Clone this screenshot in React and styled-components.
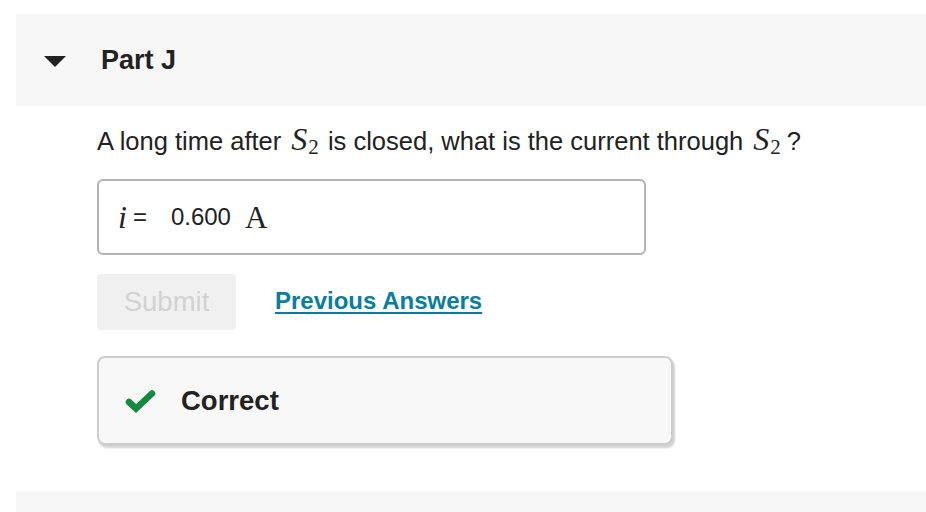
import React from "react";
import styled, { createGlobalStyle } from "styled-components";

const Global = createGlobalStyle`
  html, body {
    margin: 0;
    padding: 0;
    background: #ffffff;
    font-family: "Liberation Sans", Arial, sans-serif;
    color: #222222;
  }
`;

const Page = styled.div`
  width: 926px;
  height: 512px;
  overflow: hidden;
  padding-top: 14px;
  box-sizing: border-box;
`;

const PartHeader = styled.div`
  margin-left: 16px;
  height: 92px;
  background: #f7f7f7;
  display: flex;
  align-items: center;
  gap: 35px;
  padding-left: 28px;
  box-sizing: border-box;
`;

const Caret = styled.span`
  width: 0;
  height: 0;
  border-left: 11px solid transparent;
  border-right: 11px solid transparent;
  border-top: 11px solid #222;
  margin-top: 2px;
`;

const PartTitle = styled.h2`
  margin: 0;
  font-size: 27px;
  font-weight: 700;
  color: #222;
`;

const Body = styled.div`
  padding-left: 97px;
  padding-top: 17px;
  display: flex;
  flex-direction: column;
`;

const Question = styled.p`
  margin: 0;
  font-size: 25.5px;
  line-height: 32px;
  color: #222;
`;

const MathVar = styled.span`
  font-family: "Liberation Serif", "Times New Roman", serif;
  font-style: italic;
  font-size: 32px;
  line-height: 1;
  margin: 0 ${(p) => p.$right || "2px"} 0 3px;
  & sub {
    font-style: normal;
    font-size: 21px;
    vertical-align: -4px;
    margin-left: 1px;
  }
`;

const AnswerBox = styled.div`
  margin-top: 21px;
  width: 549px;
  height: 76px;
  box-sizing: border-box;
  border: 2px solid #b3b3b3;
  border-radius: 6px;
  display: flex;
  align-items: center;
  padding-left: 16px;
  font-size: 24px;
  color: #222;
`;

const Eq = styled.span`
  margin-left: 4px;
`;

const Value = styled.span`
  margin-left: 24px;
`;

const Unit = styled.span`
  font-family: "Liberation Serif", "Times New Roman", serif;
  font-size: 31px;
  line-height: 1;
  margin-left: 14px;
`;

const Actions = styled.div`
  margin-top: 19px;
  display: flex;
  align-items: center;
  gap: 39px;
`;

const SubmitButton = styled.button`
  width: 139px;
  height: 56px;
  border: none;
  border-radius: 4px;
  background: #f0f0f0;
  color: #d2d2d2;
  font-family: "Liberation Sans", Arial, sans-serif;
  font-size: 27.5px;
  padding: 0;
`;

const PrevLink = styled.a`
  color: #0a7ea0;
  font-weight: 700;
  font-size: 24px;
  text-decoration: underline;
  text-underline-offset: 3px;
  margin-bottom: 2px;
`;

const Feedback = styled.div`
  margin-top: 26px;
  width: 576px;
  height: 89px;
  box-sizing: border-box;
  border: 2px solid #cccccc;
  border-radius: 8px;
  background: #f8f8f8;
  box-shadow: 2px 3px 2px rgba(0, 0, 0, 0.18);
  display: flex;
  align-items: center;
  padding-left: 26px;
  gap: 24px;
`;

const FeedbackText = styled.span`
  font-size: 27.5px;
  font-weight: 700;
  color: #222;
`;

const NextPart = styled.div`
  margin-left: 16px;
  margin-top: 46px;
  height: 40px;
  background: #f7f7f7;
`;

const Check = () => (
  <svg width="32" height="24" viewBox="0 0 32 24">
    <path d="M4 13 L11 19.5 L27 4.5" fill="none" stroke="#138a3e" strokeWidth="6.5" strokeLinecap="round" strokeLinejoin="miter" />
  </svg>
);

const S2 = ({ right }) => (
  <MathVar $right={right}>
    S<sub>2</sub>
  </MathVar>
);

export default function App() {
  return (
    <>
      <Global />
      <Page>
        <PartHeader>
          <Caret />
          <PartTitle>Part J</PartTitle>
        </PartHeader>
        <Body>
          <Question>
            A long time after <S2 /> is closed, what is the current through <S2 right="6px" />?
          </Question>
          <AnswerBox>
            <MathVar>i</MathVar>
            <Eq>=</Eq>
            <Value>0.600</Value>
            <Unit>A</Unit>
          </AnswerBox>
          <Actions>
            <SubmitButton disabled>Submit</SubmitButton>
            <PrevLink href="#">Previous Answers</PrevLink>
          </Actions>
          <Feedback>
            <Check />
            <FeedbackText>Correct</FeedbackText>
          </Feedback>
        </Body>
        <NextPart />
      </Page>
    </>
  );
}
